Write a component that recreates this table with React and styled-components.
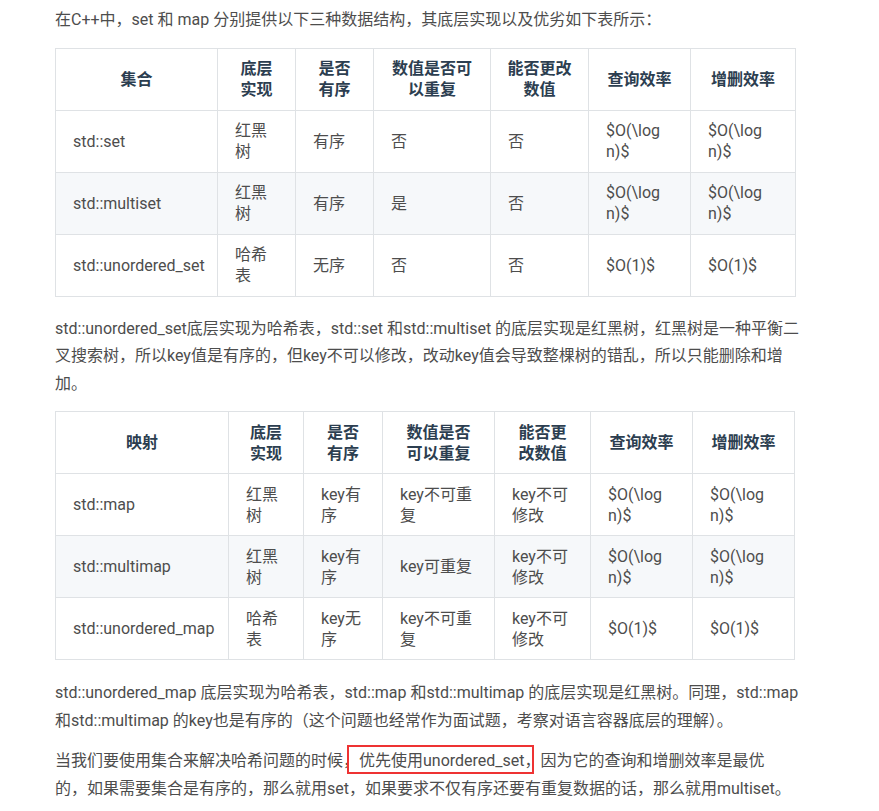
import React from "react";
import styled, { createGlobalStyle } from "styled-components";

const Global = createGlobalStyle`
  html, body { margin: 0; padding: 0; background: #ffffff; }
  body {
    font-family: Roboto, "Noto Sans CJK SC", sans-serif;
    font-size: 16px;
    color: #4d4d4d;
  }
`;

const Page = styled.main`
  width: 740px;
  padding: 6px 0 20px 55px;
`;

const Para = styled.p`
  margin: 0 0 ${(p) => p.$mb || 0}px 0;
  line-height: 27.5px;
  color: #4d4d4d;
  white-space: nowrap;
`;

const Table = styled.table`
  width: ${(p) => p.$w}px;
  border-collapse: collapse;
  table-layout: fixed;
  margin: 0 0 ${(p) => p.$mb || 0}px 0;
`;

const HeadCell = styled.th`
  border: 1px solid #dfe2e5;
  padding: 9.5px 16px;
  line-height: 21px;
  font-weight: 700;
  color: #2c3e50;
  text-align: center;
  vertical-align: middle;
  white-space: nowrap;
`;

const Row = styled.tr`
  background: ${(p) => (p.$striped ? "#f6f8fa" : "#ffffff")};
`;

const Cell = styled.td`
  border: 1px solid #dfe2e5;
  padding: 9.5px 16px 9.5px 17px;
  line-height: 21px;
  color: #4d4d4d;
  text-align: left;
  vertical-align: middle;
`;

const Marked = styled.span`
  position: relative;
  &::after {
    content: "";
    position: absolute;
    left: -12px;
    right: -9px;
    top: -6px;
    bottom: -4px;
    border: 2px solid #ee3333;
    pointer-events: none;
  }
`;

function Lines({ lines }) {
  return lines.map((l, i) => (
    <React.Fragment key={i}>
      {i > 0 && <br />}
      {l}
    </React.Fragment>
  ));
}

function DataTable({ widths, heads, rows, mb }) {
  const total = widths.reduce((a, b) => a + b, 0);
  return (
    <Table $w={total} $mb={mb}>
      <colgroup>
        {widths.map((w, i) => (
          <col key={i} style={{ width: w }} />
        ))}
      </colgroup>
      <thead>
        <tr>
          {heads.map((h, i) => (
            <HeadCell key={i}>
              <Lines lines={h} />
            </HeadCell>
          ))}
        </tr>
      </thead>
      <tbody>
        {rows.map((r, i) => (
          <Row key={i} $striped={i % 2 === 1}>
            {r.map((c, j) => (
              <Cell key={j}>{c}</Cell>
            ))}
          </Row>
        ))}
      </tbody>
    </Table>
  );
}

const LOG = "$O(\\log n)$";
const ONE = "$O(1)$";

const setTable = {
  widths: [162, 78, 78, 117, 98, 102, 105],
  heads: [
    ["集合"],
    ["底层", "实现"],
    ["是否", "有序"],
    ["数值是否可", "以重复"],
    ["能否更改", "数值"],
    ["查询效率"],
    ["增删效率"],
  ],
  rows: [
    ["std::set", "红黑树", "有序", "否", "否", LOG, LOG],
    ["std::multiset", "红黑树", "有序", "是", "否", LOG, LOG],
    ["std::unordered_set", "哈希表", "无序", "否", "否", ONE, ONE],
  ],
};

const mapTable = {
  widths: [173, 75, 79, 112, 96, 102, 102],
  heads: [
    ["映射"],
    ["底层", "实现"],
    ["是否", "有序"],
    ["数值是否", "可以重复"],
    ["能否更", "改数值"],
    ["查询效率"],
    ["增删效率"],
  ],
  rows: [
    ["std::map", "红黑树", "key有序", "key不可重复", "key不可修改", LOG, LOG],
    ["std::multimap", "红黑树", "key有序", "key可重复", "key不可修改", LOG, LOG],
    ["std::unordered_map", "哈希表", "key无序", "key不可重复", "key不可修改", ONE, ONE],
  ],
};

export default function App() {
  return (
    <>
      <Global />
      <Page>
        <Para $mb={14}>
          在C++中，set 和 map 分别提供以下三种数据结构，其底层实现以及优劣如下表所示：
        </Para>
        <DataTable {...setTable} mb={18} />
        <Para $mb={14}>
          <Lines
            lines={[
              "std::unordered_set底层实现为哈希表，std::set 和std::multiset 的底层实现是红黑树，红黑树是一种平衡二",
              "叉搜索树，所以key值是有序的，但key不可以修改，改动key值会导致整棵树的错乱，所以只能删除和增",
              "加。",
            ]}
          />
        </Para>
        <DataTable {...mapTable} mb={19} />
        <Para $mb={13}>
          <Lines
            lines={[
              "std::unordered_map 底层实现为哈希表，std::map 和std::multimap 的底层实现是红黑树。同理，std::map",
              "和std::multimap 的key也是有序的（这个问题也经常作为面试题，考察对语言容器底层的理解）。",
            ]}
          />
        </Para>
        <Para>
          当我们要使用集合来解决哈希问题的时候，<Marked>优先使用unordered_set</Marked>，因为它的查询和增删效率是最优
          <br />
          的，如果需要集合是有序的，那么就用set，如果要求不仅有序还要有重复数据的话，那么就用multiset。
        </Para>
      </Page>
    </>
  );
}
